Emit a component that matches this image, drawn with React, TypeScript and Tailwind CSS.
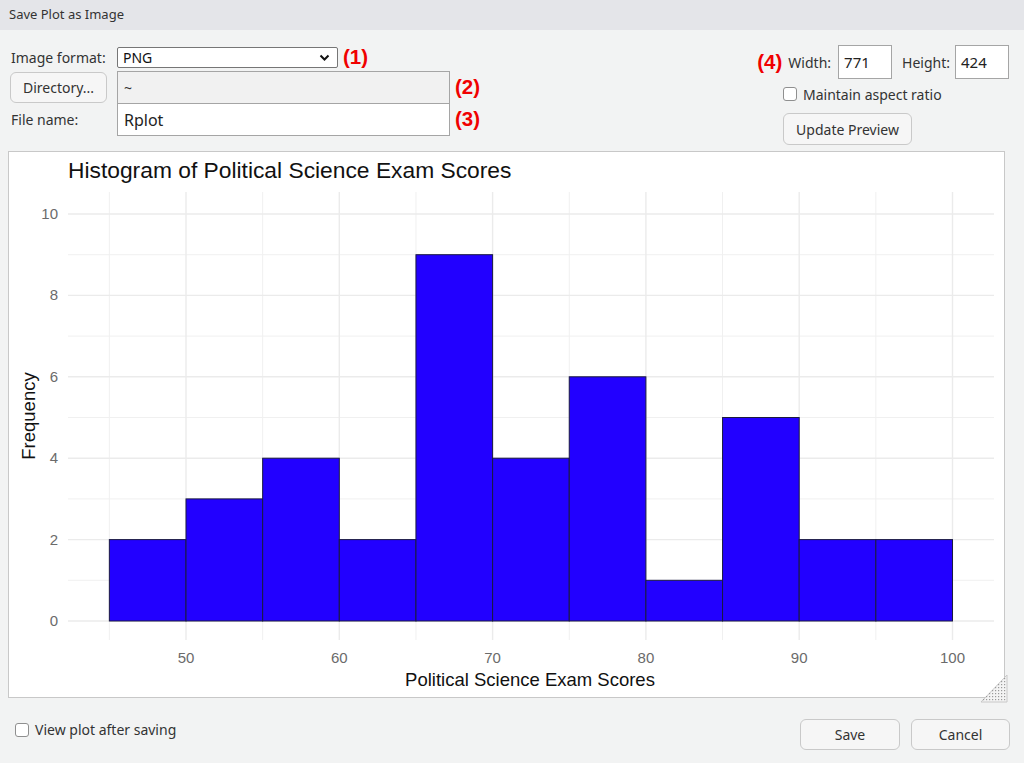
import React from 'react';

const counts = [2, 3, 4, 2, 9, 4, 6, 1, 5, 2, 2];

// page coordinates, the svg viewBox is laid over the panel
const xOf = (v: number) => 186 + (v - 50) * 15.33;
const yOf = (v: number) => 621 - v * 40.7;

const Histogram: React.FC = () => {
    const majorX = [50, 60, 70, 80, 90, 100];
    const minorX = [45, 55, 65, 75, 85, 95];
    const majorY = [0, 2, 4, 6, 8, 10];
    const minorY = [1, 3, 5, 7, 9];
    return (
        <svg viewBox="9 152 995 545" className="block w-full h-full">
            {minorY.map((v) => (
                <line key={'my' + v} x1={68} x2={994} y1={yOf(v)} y2={yOf(v)} stroke="#f0f0f0" strokeWidth={1} />
            ))}
            {minorX.map((v) => (
                <line key={'mx' + v} x1={xOf(v)} x2={xOf(v)} y1={192} y2={640} stroke="#f0f0f0" strokeWidth={1} />
            ))}
            {majorY.map((v) => (
                <line key={'gy' + v} x1={68} x2={994} y1={yOf(v)} y2={yOf(v)} stroke="#ebebeb" strokeWidth={1.4} />
            ))}
            {majorX.map((v) => (
                <line key={'gx' + v} x1={xOf(v)} x2={xOf(v)} y1={192} y2={640} stroke="#ebebeb" strokeWidth={1.4} />
            ))}
            {counts.map((c, i) => {
                const x0 = xOf(45 + i * 5);
                const x1 = xOf(50 + i * 5);
                return (
                    <rect
                        key={i}
                        x={x0}
                        y={yOf(c)}
                        width={x1 - x0}
                        height={yOf(0) - yOf(c)}
                        fill="#2200ff"
                        stroke="#1a1a40"
                        strokeWidth={1}
                    />
                );
            })}
            <g fontFamily="'Liberation Sans', Arial, sans-serif" fontSize={15} fill="#6b6b6b">
                {majorY.map((v) => (
                    <text key={'ty' + v} x={58} y={yOf(v) + 5} textAnchor="end">{v}</text>
                ))}
                {majorX.map((v) => (
                    <text key={'tx' + v} x={xOf(v)} y={663} textAnchor="middle">{v}</text>
                ))}
            </g>
            <g fontFamily="'Liberation Sans', Arial, sans-serif" fill="#111">
                <text x={68} y={178} fontSize={22.8}>Histogram of Political Science Exam Scores</text>
                <text x={530} y={686} fontSize={18.5} textAnchor="middle">Political Science Exam Scores</text>
                <text x={35} y={416} fontSize={18.5} textAnchor="middle" transform="rotate(-90 35 416)">Frequency</text>
            </g>
        </svg>
    );
};

const ResizeGrip: React.FC = () => {
    const dots: React.ReactElement[] = [];
    for (let r = 0; r < 8; r++) {
        for (let c = 7 - r; c < 8; c++) {
            dots.push(<rect key={r + '-' + c} x={c * 3 + 1} y={r * 3 + 1} width={1.2} height={1.2} fill="#9a9a9a" />);
        }
    }
    return (
        <svg width="28" height="29" viewBox="0 0 28 29" className="absolute right-[-4px] bottom-[-6px]">
            <path d="M27 1 L27 28 L1 28 Z" fill="#f4f4f4" stroke="#c8c8c8" strokeWidth={1} />
            <g transform="translate(2 3)">{dots}</g>
        </svg>
    );
};

const RedTag: React.FC<{ children: React.ReactNode; className?: string }> = ({ children, className }) => (
    <span className={`font-['Liberation_Sans',Arial,sans-serif] font-bold text-[20.5px] text-[#f00000] leading-none ${className ?? ''}`}>
        {children}
    </span>
);

export default function App() {
    return (
        <div className="w-[1024px] h-[763px] bg-[#f2f3f3] font-['Noto_Sans',sans-serif] text-[14px] text-[#333] overflow-hidden">
            <div className="h-[30px] bg-[#e4e5e9] flex items-center pl-[9px] text-[13px] text-[#333]">
                Save Plot as Image
            </div>

            <div className="flex justify-between pt-[15px] pl-[10px] pr-[15px]">
                <div className="pt-[2px]">
                    <div className="flex items-center h-[21px]">
                        <span className="w-[107px] pl-[1px]">Image format:</span>
                        <div className="w-[221px] h-[21px] bg-white border border-[#767676] rounded-[2px] flex items-center justify-between pl-[5px] pr-[7px]">
                            <span className="text-[14px] text-[#111]">PNG</span>
                            <svg width="11" height="8" viewBox="0 0 11 8">
                                <path d="M1.5 1.5 L5.5 5.5 L9.5 1.5" fill="none" stroke="#111" strokeWidth={2} />
                            </svg>
                        </div>
                        <RedTag className="ml-[5px]">(1)</RedTag>
                    </div>
                    <div className="flex items-center mt-[3px]">
                        <button className="w-[97px] h-[31px] bg-[#f6f6f6] border border-[#c9c9c9] rounded-[6px] text-[14px] text-[#333]">
                            Directory...
                        </button>
                        <div className="ml-[10px] w-[333px] h-[33px] bg-[#f1f1f1] border border-[#a5a5a5] flex items-center pl-[6px] text-[#333]">
                            ~
                        </div>
                        <RedTag className="ml-[5px]">(2)</RedTag>
                    </div>
                    <div className="flex items-center -mt-px">
                        <span className="w-[107px] pl-[1px]">File name:</span>
                        <div className="w-[333px] h-[33px] bg-white border border-[#a5a5a5] flex items-center pl-[6px] text-[16px] text-[#222]">
                            Rplot
                        </div>
                        <RedTag className="ml-[5px]">(3)</RedTag>
                    </div>
                </div>

                <div className="flex flex-col w-[256px]">
                    <div className="flex items-center justify-end h-[34px]">
                        <RedTag>(4)</RedTag>
                        <span className="ml-[6px]">Width:</span>
                        <div className="ml-[7px] w-[54px] h-[34px] bg-white border border-[#a5a5a5] flex items-center pl-[5px] text-[15px] text-[#222]">771</div>
                        <span className="ml-[10px]">Height:</span>
                        <div className="ml-[5px] w-[54px] h-[34px] bg-white border border-[#a5a5a5] flex items-center pl-[5px] text-[15px] text-[#222]">424</div>
                    </div>
                    <label className="flex items-center mt-[8px] pl-[30px] h-[14px]">
                        <span className="w-[14px] h-[14px] bg-white border border-[#8f8f8f] rounded-[3px]" />
                        <span className="ml-[6px]">Maintain aspect ratio</span>
                    </label>
                    <div className="pl-[30px] mt-[12px]">
                        <button className="w-[129px] h-[32px] bg-[#f6f6f6] border border-[#c9c9c9] rounded-[6px] text-[14px] text-[#333]">
                            Update Preview
                        </button>
                    </div>
                </div>
            </div>

            <div className="mt-[6px] ml-[8px] w-[997px] h-[547px] bg-white border border-[#c8c8c8] relative">
                <Histogram />
                <ResizeGrip />
            </div>

            <div className="flex items-center justify-between mt-[21px] pl-[15px] pr-[14px]">
                <label className="flex items-center -mt-[10px]">
                    <span className="w-[14px] h-[14px] bg-white border border-[#8f8f8f] rounded-[3px]" />
                    <span className="ml-[6px]">View plot after saving</span>
                </label>
                <div className="flex gap-[11px]">
                    <button className="w-[100px] h-[31px] bg-[#f6f6f6] border border-[#c9c9c9] rounded-[6px] text-[14px] text-[#333]">Save</button>
                    <button className="w-[99px] h-[31px] bg-[#f6f6f6] border border-[#c9c9c9] rounded-[6px] text-[14px] text-[#333]">Cancel</button>
                </div>
            </div>
        </div>
    );
}
